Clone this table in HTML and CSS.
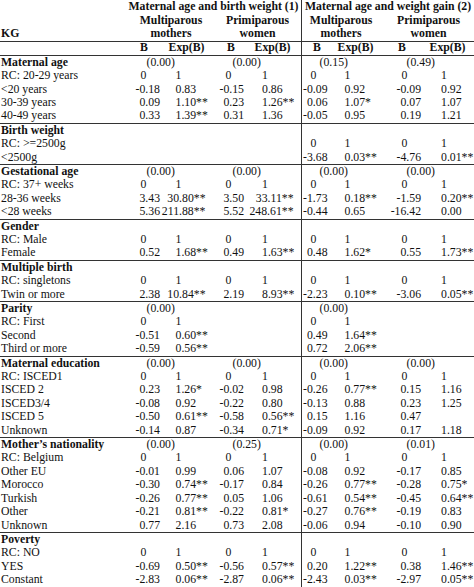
FILE: index.html
```html
<!DOCTYPE html>
<html lang="en">
<head>
<meta charset="utf-8">
<title>KG regression table</title>
<link rel="stylesheet" href="styles.css">
</head>
<body>
<table class="tbl">
  <colgroup>
    <col class="c-label"><col class="c-b1"><col class="c-e1"><col class="c-b2"><col class="c-e2"><col class="c-b3"><col class="c-e3"><col class="c-b4"><col class="c-e4">
  </colgroup>
  <thead>
    <tr class="hd">
      <td></td>
      <th colspan="4" class="t1">Maternal age and birth weight (1)</th>
      <th colspan="4" class="t2 v">Maternal age and weight gain (2)</th>
    </tr>
    <tr class="hd">
      <td></td>
      <th colspan="2">Multiparous</th>
      <th colspan="2">Primiparous</th>
      <th colspan="2" class="v m2">Multiparous</th>
      <th colspan="2" class="p2">Primiparous</th>
    </tr>
    <tr class="hd">
      <th class="kg">KG</th>
      <th colspan="2">mothers</th>
      <th colspan="2">women</th>
      <th colspan="2" class="v m2">mothers</th>
      <th colspan="2" class="p2">women</th>
    </tr>
    <tr class="sub">
      <td></td>
      <th>B</th><th>Exp(B)</th>
      <th>B</th><th>Exp(B)</th>
      <th class="v">B</th><th>Exp(B)</th>
      <th>B</th><th>Exp(B)</th>
    </tr>
  </thead>
  <tbody>
    <tr class="g"><td>Maternal age</td><td colspan="2">(0.00)</td><td colspan="2">(0.00)</td><td colspan="2">(0.15)</td><td colspan="2">(0.49)</td></tr>
    <tr class="r"><td>RC: 20-29 years</td><td class="z">0</td><td>1</td><td class="z">0</td><td>1</td><td class="z">0</td><td>1</td><td class="z">0</td><td>1</td></tr>
    <tr class="r"><td>&lt;20 years</td><td>-0.18</td><td>0.83</td><td>-0.15</td><td>0.86</td><td>-0.09</td><td>0.92</td><td>-0.09</td><td>0.92</td></tr>
    <tr class="r"><td>30-39 years</td><td>0.09</td><td>1.10**</td><td>0.23</td><td>1.26**</td><td>0.06</td><td>1.07*</td><td>0.07</td><td>1.07</td></tr>
    <tr class="r"><td>40-49 years</td><td>0.33</td><td>1.39**</td><td>0.31</td><td>1.36</td><td>-0.05</td><td>0.95</td><td>0.19</td><td>1.21</td></tr>

    <tr class="g"><td>Birth weight</td><td colspan="2"></td><td colspan="2"></td><td colspan="2"></td><td colspan="2"></td></tr>
    <tr class="r"><td>RC: &gt;=2500g</td><td></td><td></td><td></td><td></td><td class="z">0</td><td>1</td><td class="z">0</td><td>1</td></tr>
    <tr class="r"><td>&lt;2500g</td><td></td><td></td><td></td><td></td><td>-3.68</td><td>0.03**</td><td>-4.76</td><td>0.01**</td></tr>

    <tr class="g"><td>Gestational age</td><td colspan="2">(0.00)</td><td colspan="2">(0.00)</td><td colspan="2">(0.00)</td><td colspan="2">(0.00)</td></tr>
    <tr class="r"><td>RC: 37+ weeks</td><td class="z">0</td><td>1</td><td class="z">0</td><td>1</td><td class="z">0</td><td>1</td><td class="z">0</td><td>1</td></tr>
    <tr class="r"><td>28-36 weeks</td><td>3.43</td><td class="w">30.80**</td><td>3.50</td><td class="w">33.11**</td><td>-1.73</td><td>0.18**</td><td>-1.59</td><td>0.20**</td></tr>
    <tr class="r"><td>&lt;28 weeks</td><td>5.36</td><td class="w">211.88**</td><td>5.52</td><td class="w">248.61**</td><td>-0.44</td><td>0.65</td><td>-16.42</td><td>0.00</td></tr>

    <tr class="g"><td>Gender</td><td colspan="2"></td><td colspan="2"></td><td colspan="2"></td><td colspan="2"></td></tr>
    <tr class="r"><td>RC: Male</td><td class="z">0</td><td>1</td><td class="z">0</td><td>1</td><td class="z">0</td><td>1</td><td class="z">0</td><td>1</td></tr>
    <tr class="r"><td>Female</td><td>0.52</td><td>1.68**</td><td>0.49</td><td>1.63**</td><td>0.48</td><td>1.62*</td><td>0.55</td><td>1.73**</td></tr>

    <tr class="g"><td>Multiple birth</td><td colspan="2"></td><td colspan="2"></td><td colspan="2"></td><td colspan="2"></td></tr>
    <tr class="r"><td>RC: singletons</td><td class="z">0</td><td>1</td><td class="z">0</td><td>1</td><td class="z">0</td><td>1</td><td class="z">0</td><td>1</td></tr>
    <tr class="r"><td>Twin or more</td><td>2.38</td><td class="w">10.84**</td><td>2.19</td><td>8.93**</td><td>-2.23</td><td>0.10**</td><td>-3.06</td><td>0.05**</td></tr>

    <tr class="g"><td>Parity</td><td colspan="2">(0.00)</td><td colspan="2"></td><td colspan="2">(0.00)</td><td colspan="2"></td></tr>
    <tr class="r"><td>RC: First</td><td class="z">0</td><td>1</td><td></td><td></td><td class="z">0</td><td>1</td><td></td><td></td></tr>
    <tr class="r"><td>Second</td><td>-0.51</td><td>0.60**</td><td></td><td></td><td>0.49</td><td>1.64**</td><td></td><td></td></tr>
    <tr class="r"><td>Third or more</td><td>-0.59</td><td>0.56**</td><td></td><td></td><td>0.72</td><td>2.06**</td><td></td><td></td></tr>

    <tr class="g"><td>Maternal education</td><td colspan="2">(0.00)</td><td colspan="2">(0.00)</td><td colspan="2">(0.00)</td><td colspan="2">(0.00)</td></tr>
    <tr class="r"><td>RC: ISCED1</td><td class="z">0</td><td>1</td><td class="z">0</td><td>1</td><td class="z">0</td><td>1</td><td class="z">0</td><td>1</td></tr>
    <tr class="r"><td>ISCED 2</td><td>0.23</td><td>1.26*</td><td>-0.02</td><td>0.98</td><td>-0.26</td><td>0.77**</td><td>0.15</td><td>1.16</td></tr>
    <tr class="r"><td>ISCED3/4</td><td>-0.08</td><td>0.92</td><td>-0.22</td><td>0.80</td><td>-0.13</td><td>0.88</td><td>0.23</td><td>1.25</td></tr>
    <tr class="r"><td>ISCED 5</td><td>-0.50</td><td>0.61**</td><td>-0.58</td><td>0.56**</td><td>0.15</td><td>1.16</td><td>0.47</td><td></td></tr>
    <tr class="r"><td>Unknown</td><td>-0.14</td><td>0.87</td><td>-0.34</td><td>0.71*</td><td>-0.09</td><td>0.92</td><td>0.17</td><td>1.18</td></tr>

    <tr class="g"><td>Mother’s nationality</td><td colspan="2">(0.00)</td><td colspan="2">(0.25)</td><td colspan="2">(0.00)</td><td colspan="2">(0.01)</td></tr>
    <tr class="r"><td>RC: Belgium</td><td class="z">0</td><td>1</td><td class="z">0</td><td>1</td><td class="z">0</td><td>1</td><td class="z">0</td><td>1</td></tr>
    <tr class="r"><td>Other EU</td><td>-0.01</td><td>0.99</td><td>0.06</td><td>1.07</td><td>-0.08</td><td>0.92</td><td>-0.17</td><td>0.85</td></tr>
    <tr class="r"><td>Morocco</td><td>-0.30</td><td>0.74**</td><td>-0.17</td><td>0.84</td><td>-0.26</td><td>0.77**</td><td>-0.28</td><td>0.75*</td></tr>
    <tr class="r"><td>Turkish</td><td>-0.26</td><td>0.77**</td><td>0.05</td><td>1.06</td><td>-0.61</td><td>0.54**</td><td>-0.45</td><td>0.64**</td></tr>
    <tr class="r"><td>Other</td><td>-0.21</td><td>0.81**</td><td>-0.22</td><td>0.81*</td><td>-0.27</td><td>0.76**</td><td>-0.19</td><td>0.83</td></tr>
    <tr class="r"><td>Unknown</td><td>0.77</td><td>2.16</td><td>0.73</td><td>2.08</td><td>-0.06</td><td>0.94</td><td>-0.10</td><td>0.90</td></tr>

    <tr class="g"><td>Poverty</td><td colspan="2"></td><td colspan="2"></td><td colspan="2"></td><td colspan="2"></td></tr>
    <tr class="r"><td>RC: NO</td><td class="z">0</td><td>1</td><td class="z">0</td><td>1</td><td class="z">0</td><td>1</td><td class="z">0</td><td>1</td></tr>
    <tr class="r"><td>YES</td><td>-0.69</td><td>0.50**</td><td>-0.56</td><td>0.57**</td><td>0.20</td><td>1.22**</td><td>0.38</td><td>1.46**</td></tr>
    <tr class="r"><td>Constant</td><td>-2.83</td><td>0.06**</td><td>-2.87</td><td>0.06**</td><td>-2.43</td><td>0.03**</td><td>-2.97</td><td>0.05**</td></tr>
  </tbody>
</table>
</body>
</html>
```

FILE: styles.css
```css
html, body {
  margin: 0;
  padding: 0;
  background: #ffffff;
  overflow: hidden;
}

.tbl {
  border-collapse: separate;
  border-spacing: 0;
  table-layout: fixed;
  width: 500px;
  font-family: "Liberation Serif", "Times New Roman", serif;
  font-size: 11.75px;
  color: #111111;
}

.c-label { width: 128px; }
.c-b1 { width: 33px; }
.c-e1 { width: 53px; }
.c-b2 { width: 32px; }
.c-e2 { width: 55px; }
.c-b3 { width: 27px; }
.c-e3 { width: 60px; }
.c-b4 { width: 34px; }
.c-e4 { width: 78px; }

.tbl td,
.tbl th {
  padding: 0;
  line-height: 13.4px;
  white-space: nowrap;
  vertical-align: top;
  font-weight: normal;
  text-align: left;
}

.tbl th { font-weight: bold; }

.v { border-left: 1px solid #333333; }

/* header */
.hd td, .hd th { line-height: 13.6px; text-align: center; }
.hd .t1 { text-align: center; padding-right: 2px; }
.hd .t2 { text-align: left; padding-left: 3px; }
.hd .m2 { padding-right: 8px; }
.hd .p2 { padding-right: 31px; }
.hd .kg { text-align: left; padding-left: 1px; }

.sub td, .sub th {
  line-height: 12.9px;
  border-top: 1px solid #333333;
}
.sub th:nth-child(2) { padding-left: 12px; }
.sub th:nth-child(3) { text-align: right; padding-right: 9.5px; }
.sub th:nth-child(4) { padding-left: 13px; }
.sub th:nth-child(5) { text-align: right; padding-right: 10.5px; }
.sub th:nth-child(6) { padding-left: 11px; }
.sub th:nth-child(7) { text-align: right; padding-right: 14.5px; }
.sub th:nth-child(8) { padding-left: 10px; }
.sub th:nth-child(9) { text-align: right; padding-right: 34.5px; }

/* group rows */
.g td { border-top: 1px solid #333333; padding-left: 18.5px; }
.g td:first-child { font-weight: bold; padding-left: 1px; }
.g td:nth-child(4) { border-left: 1px solid #333333; padding-left: 17.5px; }

/* data rows */
.r td:first-child { padding-left: 1px; }
.r td:nth-child(2) { text-align: right; padding-right: 1px; }
.r td:nth-child(2).z { text-align: left; padding-right: 0; padding-left: 12.5px; }
.r td:nth-child(3) { padding-left: 14.5px; }
.r td:nth-child(3).w { text-align: right; padding-left: 0; padding-right: 8.5px; }
.r td:nth-child(4) { text-align: right; padding-right: 2px; }
.r td:nth-child(4).z { text-align: left; padding-right: 0; padding-left: 11.5px; }
.r td:nth-child(5) { padding-left: 16px; }
.r td:nth-child(5).w { text-align: right; padding-left: 0; padding-right: 7.5px; }
.r td:nth-child(6) { text-align: right; padding-right: 0.5px; border-left: 1px solid #333333; }
.r td:nth-child(6).z { text-align: left; padding-right: 0; padding-left: 8.5px; }
.r td:nth-child(7) { padding-left: 16.5px; }
.r td:nth-child(8) { text-align: right; padding-right: 1px; }
.r td:nth-child(8).z { text-align: left; padding-right: 0; padding-left: 13.5px; }
.r td:nth-child(9) { padding-left: 19px; }
```
